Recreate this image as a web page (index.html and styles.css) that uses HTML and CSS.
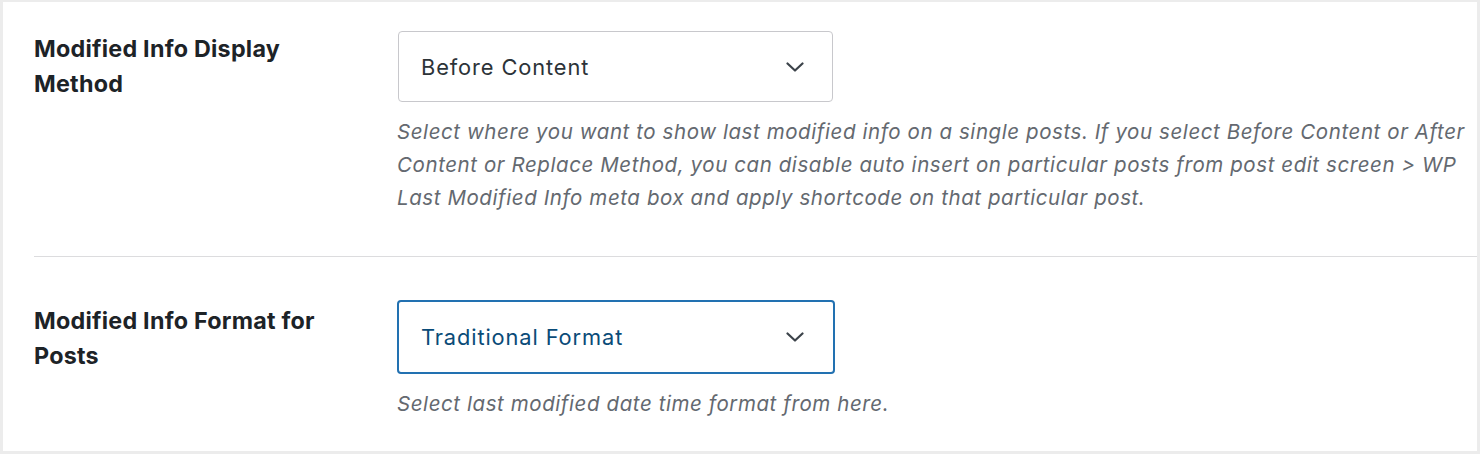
FILE: index.html
```html
<!DOCTYPE html>
<html>
<head>
<meta charset="utf-8">
<link rel="stylesheet" href="styles.css">
</head>
<body>
<div class="frame">
  <div class="row first">
    <div class="label">Modified Info Display Method</div>
    <div class="field">
      <div class="select">
        <span class="value">Before Content</span>
        <svg class="chev" width="18" height="10" viewBox="0 0 18 10"><path d="M1.5 1.5 L9 8.5 L16.5 1.5" fill="none" stroke="#3c434a" stroke-width="2.2" stroke-linecap="round" stroke-linejoin="round"/></svg>
      </div>
      <p class="desc">Select where you want to show last modified info on a single posts. If you select Before Content or After Content or Replace Method, you can disable auto insert on particular posts from post edit screen &gt; WP Last Modified Info meta box and apply shortcode on that particular post.</p>
    </div>
  </div>
  <div class="row second">
    <div class="label">Modified Info Format for Posts</div>
    <div class="field">
      <div class="select focus">
        <span class="value">Traditional Format</span>
        <svg class="chev" width="18" height="10" viewBox="0 0 18 10"><path d="M1.5 1.5 L9 8.5 L16.5 1.5" fill="none" stroke="#3c434a" stroke-width="2.2" stroke-linecap="round" stroke-linejoin="round"/></svg>
      </div>
      <p class="desc">Select last modified date time format from here.</p>
    </div>
  </div>
</div>
</body>
</html>
```
FILE: styles.css
```css
html, body {
  margin: 0;
  padding: 0;
  background: #ffffff;
}
body {
  font-family: Inter, "Noto Sans", "Liberation Sans", sans-serif;
  color: #1d2327;
}
.frame {
  width: 1480px;
  height: 454px;
  box-sizing: border-box;
  border-top: 2px solid #ececec;
  border-left: 3px solid #ececec;
  border-right: 3px solid #ececec;
  border-bottom: 3px solid #ececec;
  padding-left: 31px;
}
.row {
  display: grid;
  grid-template-columns: 363px 1fr;
}
.row.first {
  padding-top: 29px;
  padding-bottom: 42px;
  border-bottom: 1px solid #dcdcde;
}
.row.second {
  padding-top: 43px;
}
.label {
  font-weight: 700;
  font-size: 23.3px;
  letter-spacing: 0.25px;
  line-height: 35px;
  width: 310px;
  color: #1d2327;
}
.second .label {
  padding-top: 3px;
}
.select {
  width: 435px;
  height: 71px;
  box-sizing: border-box;
  border: 1px solid #c8c8cc;
  border-radius: 4px;
  display: flex;
  align-items: center;
  justify-content: space-between;
  padding: 0 28px 0 22px;
  font-size: 21.8px;
  letter-spacing: 0.9px;
  color: #2c3338;
}
.first .select {
  margin-left: 1px;
}
.select.focus {
  border: 2px solid #2271b1;
  height: 74px;
  width: 438px;
  padding-left: 22px;
  padding-right: 29px;
  color: #0a4b78;
}
.chev {
  display: block;
}
.desc {
  margin: 13px 0 0 0;
  font-style: italic;
  font-size: 20.5px;
  letter-spacing: 0.58px;
  line-height: 33px;
  color: #646970;
  max-width: 1075px;
}
.second .desc {
  margin-top: 13px;
}
```
